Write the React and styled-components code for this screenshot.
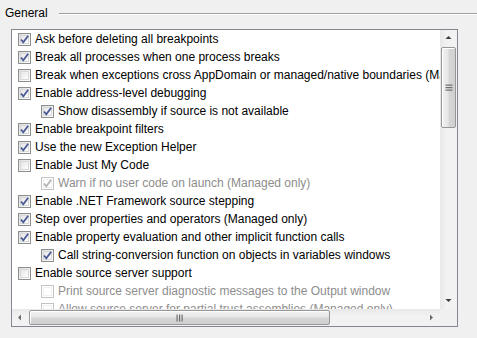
import styled, { createGlobalStyle } from "styled-components";

const Global = createGlobalStyle`
  html, body {
    margin: 0;
    padding: 0;
    background: #f0f0f0;
  }
  body {
    font-family: "Liberation Sans", Arial, sans-serif;
    font-size: 12px;
    color: #000;
  }
`;

const Page = styled.div`
  width: 477px;
  height: 338px;
  overflow: hidden;
  padding: 5px 0 0 0;
  box-sizing: border-box;
`;

const GroupHeader = styled.div`
  display: flex;
  align-items: center;
  gap: 11px;
  padding-left: 5px;
  height: 16px;
`;

const GroupTitle = styled.span`
  line-height: 16px;
`;

const Rule = styled.div`
  flex: 1;
  height: 0;
  border-top: 1px solid #a0a0a0;
  border-bottom: 1px solid #ffffff;
  margin-top: 1px;
`;

const Panel = styled.div`
  margin: 8px 0 0 11px;
  width: 447px;
  height: 298px;
  box-sizing: border-box;
  border: 1px solid #828790;
  background: #fff;
  display: grid;
  grid-template-columns: 1fr 17px;
  grid-template-rows: 1fr 17px;
`;

const Content = styled.div`
  overflow: hidden;
  padding: 0 0 0 6px;
`;

const Row = styled.div`
  display: flex;
  align-items: center;
  gap: 4px;
  height: 18px;
  padding-left: ${(p) => (p.$indent ? 23 : 0)}px;
  white-space: nowrap;
  color: ${(p) => (p.$disabled ? "#8d8d8d" : "#000")};
`;

const Box = styled.span`
  flex: none;
  width: 13px;
  height: 13px;
  box-sizing: border-box;
  border: 1px solid ${(p) => (p.$disabled ? "#c4c4c4" : "#8e8f8f")};
  background: ${(p) =>
    p.$disabled
      ? "#fff"
      : "linear-gradient(135deg, #dcdcdc 0%, #f4f4f4 60%, #ffffff 100%)"};
  padding: 1px;
  display: flex;
`;

const BoxInner = styled.span`
  flex: 1;
  border: 1px solid ${(p) => (p.$disabled ? "#f0f0f0" : "#d8d8d8")};
  background: ${(p) =>
    p.$disabled ? "#fff" : "linear-gradient(135deg, #e4e4e4, #ffffff)"};
  position: relative;
`;

const Tick = styled.svg`
  position: absolute;
  left: -2px;
  top: -2px;
`;

const VScroll = styled.div`
  background: linear-gradient(90deg, #e8e8e8, #f2f2f2 40%, #f2f2f2);
  display: flex;
  flex-direction: column;
  align-items: stretch;
`;

const HScroll = styled.div`
  background: linear-gradient(180deg, #e8e8e8, #f2f2f2 40%, #f2f2f2);
  display: flex;
  align-items: stretch;
`;

const ArrowBtn = styled.div`
  flex: none;
  width: 17px;
  height: 17px;
  display: flex;
  align-items: center;
  justify-content: center;
`;

const VThumb = styled.div`
  margin: 0 1px;
  height: 81px;
  box-sizing: border-box;
  border: 1px solid #979797;
  border-radius: 2px;
  background: linear-gradient(90deg, #f2f2f2 0%, #e6e6e6 45%, #d6d6d6 55%, #cfcfcf 100%);
  box-shadow: inset 1px 1px 0 #fff;
  display: flex;
  align-items: center;
  justify-content: center;
`;

const HThumb = styled.div`
  margin: 1px 0;
  width: 301px;
  box-sizing: border-box;
  border: 1px solid #979797;
  border-radius: 2px;
  background: linear-gradient(180deg, #f2f2f2 0%, #e6e6e6 45%, #d6d6d6 55%, #cfcfcf 100%);
  box-shadow: inset 1px 1px 0 #fff;
  display: flex;
  align-items: center;
  justify-content: center;
`;

const Spacer = styled.div`
  flex: 1;
`;

const Corner = styled.div`
  background: #f0f0f0;
`;

const items = [
  { t: "Ask before deleting all breakpoints", c: true },
  { t: "Break all processes when one process breaks", c: true },
  { t: "Break when exceptions cross AppDomain or managed/native boundaries (Managed only)", c: false },
  { t: "Enable address-level debugging", c: true },
  { t: "Show disassembly if source is not available", c: true, i: true },
  { t: "Enable breakpoint filters", c: true },
  { t: "Use the new Exception Helper", c: true },
  { t: "Enable Just My Code", c: false },
  { t: "Warn if no user code on launch (Managed only)", c: true, i: true, d: true },
  { t: "Enable .NET Framework source stepping", c: true },
  { t: "Step over properties and operators (Managed only)", c: true },
  { t: "Enable property evaluation and other implicit function calls", c: true },
  { t: "Call string-conversion function on objects in variables windows", c: true, i: true },
  { t: "Enable source server support", c: false },
  { t: "Print source server diagnostic messages to the Output window", c: false, i: true, d: true },
  { t: "Allow source server for partial trust assemblies (Managed only)", c: false, i: true, d: true },
];

function Check({ checked, disabled }) {
  return (
    <Box $disabled={disabled}>
      <BoxInner $disabled={disabled}>
        {checked && (
          <Tick width="11" height="11" viewBox="0 0 11 11">
            <path
              d="M2 5.5 L4.3 8.3 L9.2 1.8"
              fill="none"
              stroke={disabled ? "#b4b4b4" : "#4a5a96"}
              strokeWidth="1.8"
            />
          </Tick>
        )}
      </BoxInner>
    </Box>
  );
}

function Arrow({ dir }) {
  const pts = {
    up: "1.5,5 4.5,2 7.5,5",
    down: "1.5,3 4.5,6 7.5,3",
    left: "5,1.5 2,4.5 5,7.5",
    right: "3,1.5 6,4.5 3,7.5",
  }[dir];
  return (
    <svg width="9" height="9" viewBox="0 0 9 9">
      <polygon points={pts} fill={dir === "right" || dir === "left" ? "#6d6d6d" : "#3c3c3c"} />
    </svg>
  );
}

function Grip({ vertical }) {
  return (
    <svg width="8" height="8" viewBox="0 0 8 8">
      {[0, 2.5, 5].map((o) =>
        vertical ? (
          <rect key={o} x="0.5" y={0.5 + o} width="7" height="1.2" fill="#6f6f6f" />
        ) : (
          <rect key={o} x={0.5 + o} y="0.5" width="1.2" height="7" fill="#6f6f6f" />
        )
      )}
    </svg>
  );
}

export default function App() {
  return (
    <Page>
      <Global />
      <GroupHeader>
        <GroupTitle>General</GroupTitle>
        <Rule />
      </GroupHeader>
      <Panel>
        <Content>
          {items.map((it) => (
            <Row key={it.t} $indent={it.i} $disabled={it.d}>
              <Check checked={it.c} disabled={it.d} />
              <span>{it.t}</span>
            </Row>
          ))}
        </Content>
        <VScroll>
          <ArrowBtn>
            <Arrow dir="up" />
          </ArrowBtn>
          <VThumb>
            <Grip vertical />
          </VThumb>
          <Spacer />
          <ArrowBtn>
            <Arrow dir="down" />
          </ArrowBtn>
        </VScroll>
        <HScroll>
          <ArrowBtn>
            <Arrow dir="left" />
          </ArrowBtn>
          <HThumb>
            <Grip />
          </HThumb>
          <Spacer />
          <ArrowBtn>
            <Arrow dir="right" />
          </ArrowBtn>
        </HScroll>
        <Corner />
      </Panel>
    </Page>
  );
}
